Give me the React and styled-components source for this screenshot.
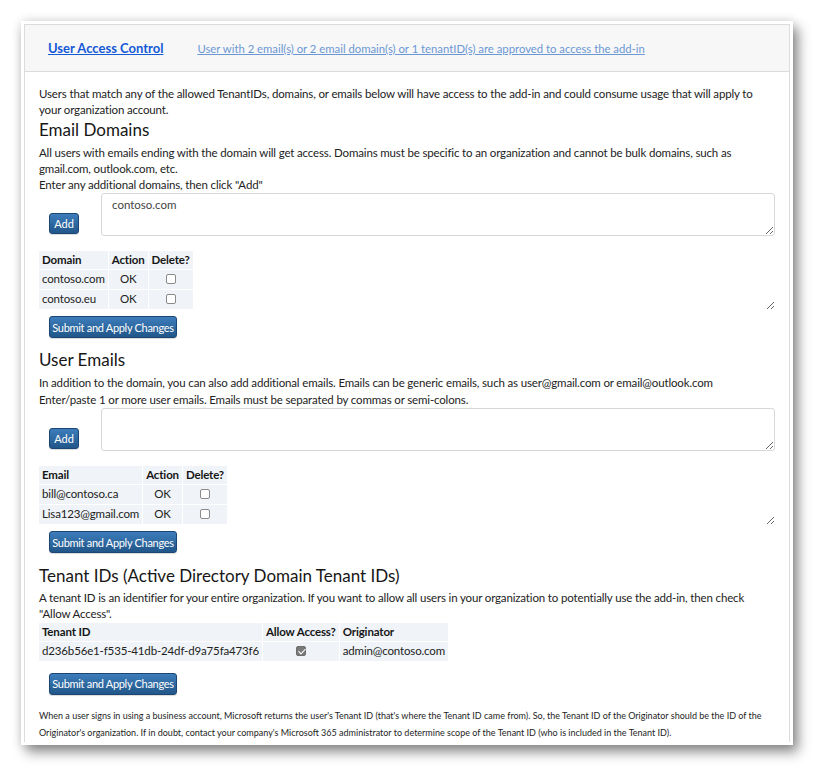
import styled, { createGlobalStyle } from "styled-components";

const GlobalStyle = createGlobalStyle`
  html, body {
    margin: 0;
    padding: 0;
    background: #ffffff;
  }
  body {
    font-family: "Lato", "Open Sans", sans-serif;
    color: #222;
  }
`;

const Page = styled.div`
  padding: 21px 42px 40px 21px;
`;

const Card = styled.div`
  width: 766px;
  padding: 3px;
  background: #fff;
  box-shadow: 5px 7px 12px rgba(0, 0, 0, 0.45), 0 0 10px rgba(0, 0, 0, 0.12);
`;

const Panel = styled.div`
  border: 1px solid #dcdcdc;
  border-bottom: none;
`;

const Header = styled.div`
  height: 46px;
  display: flex;
  align-items: center;
  gap: 34px;
  padding: 0 0 0 23px;
  background: #f7f7f7;
  border-bottom: 1px solid #dcdcdc;
`;

const TabLink = styled.a`
  font-size: ${({ $active }) => ($active ? "13px" : "11.3px")};
  font-weight: ${({ $active }) => ($active ? 700 : 400)};
  color: ${({ $active }) => ($active ? "#1459d6" : "#6b98d4")};
  text-decoration: underline;
  cursor: pointer;
`;

const Body = styled.div`
  padding: 14px 14px 1px 14px;
`;

const Text = styled.p`
  margin: ${({ $top }) => $top || 0}px 0 0;
  font-size: 11.5px;
  letter-spacing: -0.15px;
  line-height: 16.3px;
`;

const Heading = styled.h2`
  margin: ${({ $top }) => $top || 0}px 0 0;
  font-size: 17px;
  line-height: 22px;
  font-weight: 400;
  color: #161616;
`;

const AddRow = styled.div`
  display: flex;
  align-items: flex-end;
  gap: 22px;
  padding-left: 10px;
`;

const BlueButton = styled.button`
  padding: 0;
  white-space: nowrap;
  font-family: inherit;
  font-size: 11px;
  color: #fff;
  border: 1px solid #1b4673;
  border-radius: 3px;
  background: linear-gradient(#3d7dbb, #215689);
  box-shadow: 0 1px 1px rgba(0, 0, 0, 0.15);
  cursor: pointer;
`;

const AddButton = styled(BlueButton)`
  width: 30px;
  height: 21px;
  margin-bottom: 2px;
`;

const SubmitButton = styled(BlueButton)`
  display: block;
  width: 128px;
  height: 22px;
  margin: ${({ $top }) => $top || 6}px 0 0 10px;
  letter-spacing: -0.3px;
`;

const Input = styled.textarea`
  flex: 1;
  height: 43px;
  box-sizing: border-box;
  padding: 4px 10px;
  font-family: inherit;
  font-size: 11.5px;
  color: #444;
  border: 1px solid #d6d9dc;
  border-radius: 3px;
  resize: vertical;
`;

const ListRow = styled.div`
  display: flex;
  align-items: stretch;
  margin-top: 15px;
`;

const Spacer = styled.textarea`
  flex: 1;
  height: auto;
  min-height: 0;
  border: none;
  outline: none;
  background: transparent;
  resize: vertical;
  padding: 0;
`;

const Table = styled.table`
  border-collapse: collapse;
  background: #f0f4f8;
  font-size: 11.5px;
  letter-spacing: -0.15px;
  line-height: 16px;
`;

const Th = styled.th`
  text-align: left;
  font-weight: 700;
  color: #161616;
  padding: 1px 3px 1px;
  border: 1px solid #fff;
  border-width: 0 1px 1px 0;
`;

const Td = styled.td`
  padding: 1px 3px 2px;
  text-align: ${({ $center }) => ($center ? "center" : "left")};
  border: 1px solid #fff;
  border-width: 0 1px 1px 0;
`;

const Check = styled.input.attrs({ type: "checkbox" })`
  appearance: none;
  width: 10px;
  height: 10px;
  margin: 0;
  vertical-align: -1px;
  border: 1px solid #8a8a8a;
  border-radius: 2px;
  background: #fff;
  position: relative;
  &:checked {
    background: #7a7a7a;
    border-color: #6d6d6d;
  }
  &:checked::after {
    content: "";
    position: absolute;
    left: 3px;
    top: 0px;
    width: 3px;
    height: 6px;
    border: solid #fff;
    border-width: 0 1.5px 1.5px 0;
    transform: rotate(45deg);
  }
`;

const Note = styled.p`
  margin: 12px 0 0;
  font-size: 9px;
  line-height: 17px;
  color: #1e1e1e;
`;

const domains = ["contoso.com", "contoso.eu"];
const emails = ["bill@contoso.ca", "Lisa123@gmail.com"];

function ListTable({ label, rows }) {
  return (
    <Table>
      <thead>
        <tr>
          <Th>{label}</Th>
          <Th>Action</Th>
          <Th>Delete?</Th>
        </tr>
      </thead>
      <tbody>
        {rows.map((r) => (
          <tr key={r}>
            <Td>{r}</Td>
            <Td $center>OK</Td>
            <Td $center>
              <Check />
            </Td>
          </tr>
        ))}
      </tbody>
    </Table>
  );
}

export default function App() {
  return (
    <>
      <GlobalStyle />
      <Page>
        <Card>
          <Panel>
            <Header>
              <TabLink $active>User Access Control</TabLink>
              <TabLink>
                User with 2 email(s) or 2 email domain(s) or 1 tenantID(s) are approved to access the add-in
              </TabLink>
            </Header>
            <Body>
              <Text>
                Users that match any of the allowed TenantIDs, domains, or emails below will have access to the
                add-in and could consume usage that will apply to your organization account.
              </Text>
              <Heading>Email Domains</Heading>
              <Text $top={4}>
                All users with emails ending with the domain will get access. Domains must be specific to an
                organization and cannot be bulk domains, such as gmail.com, outlook.com, etc.
                <br />
                Enter any additional domains, then click "Add"
              </Text>
              <AddRow>
                <AddButton>Add</AddButton>
                <Input defaultValue="contoso.com" />
              </AddRow>
              <ListRow>
                <ListTable label="Domain" rows={domains} />
                <Spacer rows={1} />
              </ListRow>
              <SubmitButton>Submit and Apply Changes</SubmitButton>

              <Heading $top={11}>User Emails</Heading>
              <Text $top={4}>
                In addition to the domain, you can also add additional emails. Emails can be generic emails, such
                as user@gmail.com or email@outlook.com
                <br />
                Enter/paste 1 or more user emails. Emails must be separated by commas or semi-colons.
              </Text>
              <AddRow>
                <AddButton>Add</AddButton>
                <Input />
              </AddRow>
              <ListRow>
                <ListTable label="Email" rows={emails} />
                <Spacer rows={1} />
              </ListRow>
              <SubmitButton>Submit and Apply Changes</SubmitButton>

              <Heading $top={12}>Tenant IDs (Active Directory Domain Tenant IDs)</Heading>
              <Text $top={3}>
                A tenant ID is an identifier for your entire organization. If you want to allow all users in your
                organization to potentially use the add-in, then check "Allow Access".
              </Text>
              <Table>
                <thead>
                  <tr>
                    <Th>Tenant ID</Th>
                    <Th>Allow Access?</Th>
                    <Th>Originator</Th>
                  </tr>
                </thead>
                <tbody>
                  <tr>
                    <Td>d236b56e1-f535-41db-24df-d9a75fa473f6</Td>
                    <Td $center>
                      <Check defaultChecked disabled />
                    </Td>
                    <Td>admin@contoso.com</Td>
                  </tr>
                </tbody>
              </Table>
              <SubmitButton $top={11}>Submit and Apply Changes</SubmitButton>
              <Note>
                When a user signs in using a business account, Microsoft returns the user's Tenant ID (that's where
                the Tenant ID came from). So, the Tenant ID of the Originator should be the ID of the Originator's
                organization. If in doubt, contact your company's Microsoft 365 administrator to determine scope of
                the Tenant ID (who is included in the Tenant ID).
              </Note>
            </Body>
          </Panel>
        </Card>
      </Page>
    </>
  );
}
